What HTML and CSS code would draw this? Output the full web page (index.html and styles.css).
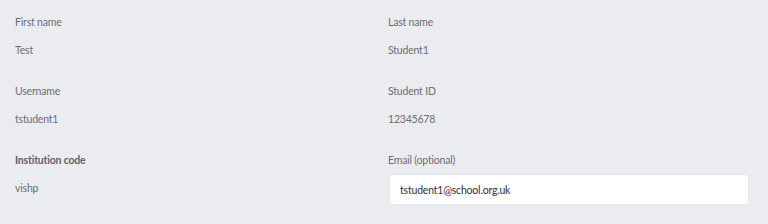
FILE: index.html
```html
<!DOCTYPE html>
<html lang="en">
<head>
    <meta charset="UTF-8">
    <title>Student details</title>
    <link rel="stylesheet" href="styles.css">
</head>
<body>
    <section class="details">
        <div class="field">
            <label>First name</label>
            <div class="value">Test</div>
        </div>
        <div class="field">
            <label>Last name</label>
            <div class="value">Student1</div>
        </div>

        <div class="field">
            <label>Username</label>
            <div class="value">tstudent1</div>
        </div>
        <div class="field">
            <label>Student ID</label>
            <div class="value">12345678</div>
        </div>

        <div class="field">
            <label class="strong">Institution code</label>
            <div class="value">vishp</div>
        </div>
        <div class="field">
            <label for="email">Email (optional)</label>
            <input type="email" id="email" value="tstudent1@school.org.uk">
        </div>
    </section>
</body>
</html>
```

FILE: styles.css
```css
body {
    margin: 0;
    background-color: #ebecf0;
    font-family: 'Lato', sans-serif;
    font-size: 10.5px;
    letter-spacing: -0.2px;
    color: #6b6e76;
}

.details {
    display: grid;
    grid-template-columns: 373px 360px;
    padding: 12px 0 0 15px;
}

.field {
    margin-bottom: 21px;
}

label {
    display: block;
    line-height: 20px;
}

label.strong {
    font-weight: bold;
    color: #5f626a;
}

.value {
    margin-top: 8px;
    line-height: 20px;
}

input {
    display: block;
    box-sizing: border-box;
    width: 360px;
    height: 31px;
    margin: 4px 0 0 1px;
    padding: 0 10px;
    border: 1px solid #e4e5ea;
    border-radius: 3px;
    background-color: #fff;
    font-family: inherit;
    font-size: 10.5px;
    letter-spacing: -0.2px;
    color: #2f3138;
}
```
